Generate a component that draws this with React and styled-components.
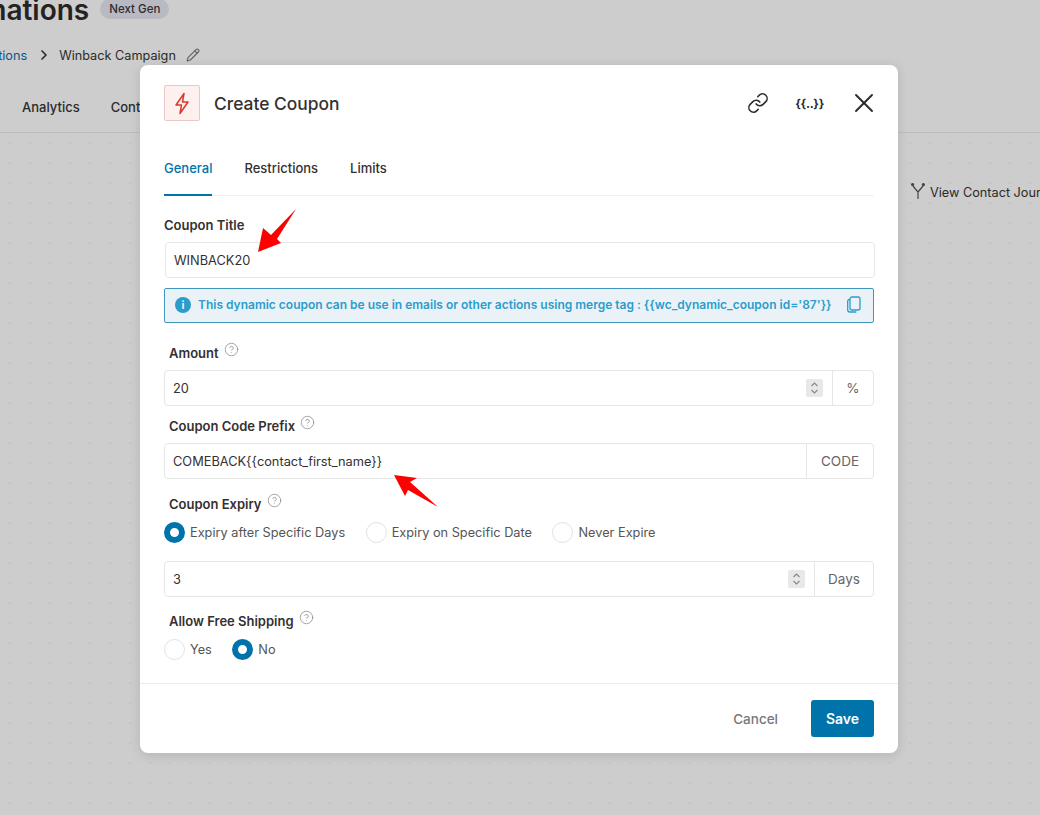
import React from 'react'
import styled, { createGlobalStyle } from 'styled-components'
import { ChevronRight, CircleHelp, Link, Pencil, X } from 'lucide-react'

const GlobalStyle = createGlobalStyle`
  html, body {
    margin: 0;
    padding: 0;
  }
  body {
    font-family: Inter, "Liberation Sans", sans-serif;
    color: #353030;
  }
  * {
    box-sizing: border-box;
  }
`

const Page = styled.div`
  position: relative;
  width: 1040px;
  height: 815px;
  overflow: hidden;
  background: #cdcdcd;
`

const PageTop = styled.div`
  height: 133px;
  border-bottom: 1px solid #bdbdbd;
`

const TitleRow = styled.div`
  display: flex;
  align-items: center;
  gap: 11px;
  height: 20px;
  margin-left: -83px;
`

const PageTitle = styled.h1`
  margin: 0;
  font-size: 28px;
  line-height: 20px;
  font-weight: 600;
  color: #252222;
  white-space: nowrap;
`

const Badge = styled.span`
  height: 20px;
  margin-top: -2px;
  padding: 0 9px;
  border-radius: 10px;
  background: #b9b9c2;
  font-size: 11.5px;
  font-weight: 500;
  line-height: 20px;
  white-space: nowrap;
  color: #2c2c30;
`

const Crumbs = styled.div`
  display: flex;
  align-items: center;
  height: 20px;
  margin: 25px 0 0 -48px;
  font-size: 12.7px;
  color: #2c2a2a;

  a {
    color: #07588a;
  }
`

const CrumbChevron = styled(ChevronRight)`
  margin: 0 7px 0 9px;
`

const CrumbPencil = styled(Pencil)`
  margin-left: 10px;
  color: #666;
`

const PageNav = styled.nav`
  display: flex;
  gap: 31px;
  margin: 32px 0 0 22px;
  font-size: 13px;
  font-weight: 500;
  line-height: 20px;
  color: #2c2a2a;
`

const Canvas = styled.div`
  display: flex;
  justify-content: flex-end;
  height: 682px;
  padding-top: 49px;
  background-image: radial-gradient(#c4c4c4 1px, transparent 1.2px);
  background-size: 20px 20px;
`

const JourneyLink = styled.div`
  display: flex;
  align-items: flex-start;
  gap: 4px;
  flex: 0 0 130px;
  min-width: 0;
  height: 22px;
  font-size: 12.7px;
  line-height: 22px;
  white-space: nowrap;
  color: #2c2a2a;

  svg {
    flex: none;
  }
`

const Modal = styled.div`
  position: absolute;
  top: 65px;
  left: 140px;
  width: 758px;
  height: 688px;
  border-radius: 8px;
  background: #fff;
  box-shadow: 0 2px 12px rgba(0, 0, 0, 0.12);
`

const ModalHeader = styled.header`
  display: flex;
  align-items: center;
  height: 76px;
  padding: 20px 24px 20px;
`

const IconBox = styled.div`
  display: flex;
  align-items: center;
  justify-content: center;
  width: 36px;
  height: 36px;
  margin-right: 14px;
  border: 1px solid #e9c9c5;
  border-radius: 2px;
  background: #fdf0ee;
  color: #d8392f;
`

const ModalTitle = styled.h2`
  flex: 1;
  margin: 0;
  font-size: 17.4px;
  font-weight: 500;
  color: #353030;
`

const HeaderActions = styled.div`
  display: flex;
  align-items: center;
  margin-right: -6px;
  color: #2c2a2a;
`

const MergeIcon = styled.span`
  margin: 0 24px 0 26px;
  font-size: 12px;
  font-weight: 700;
  letter-spacing: -0.3px;
`

const Tabs = styled.div`
  display: flex;
  gap: 32px;
  height: 55px;
  margin: 0 24px;
  border-bottom: 1px solid #f0f0f0;
`

const Tab = styled.div`
  height: 55px;
  padding-top: 17px;
  font-size: 13px;
  line-height: 20px;
  font-weight: 500;
  color: ${(p) => (p.$active ? '#0073aa' : '#353030')};
  border-bottom: 2px solid ${(p) => (p.$active ? '#0073aa' : 'transparent')};
`

const Form = styled.div`
  padding: 19px 24px 23px;
  border-bottom: 1px solid #ececec;
`

const Label = styled.div`
  display: flex;
  align-items: flex-start;
  gap: 5px;
  height: 20px;
  margin-top: ${(p) => p.$top || 0}px;
  padding-left: ${(p) => p.$indent || 0}px;
  font-size: 13px;
  line-height: 20px;
  font-weight: 600;
  color: #353030;
`

const HelpIcon = styled(CircleHelp)`
  margin-top: -1px;
  color: #888;
`

const InputGroup = styled.div`
  display: flex;
  align-items: stretch;
  height: 36px;
  margin: ${(p) => p.$top || 7}px ${(p) => -(p.$shift || 0)}px 0 ${(p) => p.$shift || 0}px;
  border: 1px solid #e6e6e6;
  border-radius: 4px;
  background: #fff;
`

const InputText = styled.div`
  flex: 1;
  padding-left: 8px;
  font-size: 12.8px;
  line-height: 35px;
  color: #353030;
`

const Stepper = styled.div`
  display: flex;
  align-items: center;
  justify-content: center;
  align-self: center;
  width: 17px;
  height: 18px;
  margin-right: 9px;
  border-radius: 2px;
  background: #e8e8e8;
  color: #888;
`

const Addon = styled.div`
  width: ${(p) => p.$width}px;
  border-left: 1px solid #e6e6e6;
  text-align: center;
  font-size: 13.5px;
  line-height: 35px;
  color: #666;
`

const Notice = styled.div`
  display: flex;
  align-items: center;
  height: 35px;
  margin-top: 10px;
  padding: 0 11px 2px 10px;
  border: 1px solid #3f97bb;
  border-radius: 2px;
  background: #eaf2f7;
  color: #2a9dcc;
`

const InfoBadge = styled.span`
  display: flex;
  align-items: center;
  justify-content: center;
  width: 16px;
  height: 16px;
  margin-right: 7px;
  border-radius: 50%;
  background: #2a9dcc;
  font-size: 11px;
  font-weight: 700;
  color: #eaf2f7;
`

const NoticeText = styled.span`
  flex: 1;
  font-size: 12px;
  font-weight: 600;
  white-space: nowrap;
`

const RadioRow = styled.div`
  display: flex;
  align-items: center;
  gap: 20.5px;
  height: 22px;
  margin-top: 7px;
`

const RadioItem = styled.div`
  display: flex;
  align-items: center;
  gap: 5px;
  font-size: 12.75px;
  color: #555;
`

const RadioDot = styled.span`
  width: 21px;
  height: 21px;
  border-radius: 50%;
  background: #fff;
  border: ${(p) => (p.$on ? '6px solid #0073aa' : '1px solid #e2e2e2')};
`

const ModalFooter = styled.footer`
  display: flex;
  align-items: center;
  justify-content: flex-end;
  gap: 33px;
  padding: 16px 24px;
`

const CancelButton = styled.button`
  padding: 0;
  border: 0;
  background: none;
  font: 500 13.5px Inter, sans-serif;
  color: #777;
`

const SaveButton = styled.button`
  width: 63px;
  height: 37px;
  border: 0;
  border-radius: 3px;
  background: #0073aa;
  font: 600 14px Inter, sans-serif;
  color: #fff;
`

const Arrow = styled.svg`
  position: absolute;
  left: ${(p) => p.$x}px;
  top: ${(p) => p.$y}px;
`

const BoltIcon = () => (
  <svg width="16" height="23" viewBox="0 0 16 23" fill="none" stroke="currentColor" strokeWidth="1.5" strokeLinejoin="round">
    <path d="M10 1.5 2 13h5.5L6 21.5 14 10H8.5z" />
  </svg>
)

const CopyIcon = () => (
  <svg width="16" height="17" viewBox="0 0 16 17" fill="none" stroke="currentColor" strokeWidth="1.3">
    <rect x="4" y="1" width="10" height="13" rx="2" />
    <path d="M4 3.5H3.4A1.7 1.7 0 0 0 1.7 5.2v8.6A2.2 2.2 0 0 0 3.9 16h6.4" />
  </svg>
)

const StepperIcon = () => (
  <svg width="9" height="14" viewBox="0 0 9 14" fill="none" stroke="currentColor" strokeWidth="1.2">
    <path d="M1.5 5 4.5 2l3 3M1.5 9l3 3 3-3" />
  </svg>
)

const ForkIcon = () => (
  <svg width="16" height="18" viewBox="0 0 16 18" fill="none" stroke="#444" strokeWidth="1.2">
    <path d="M8 17V10L3 4M8 10l5-6" />
    <circle cx="2.6" cy="2.6" r="1" fill="#444" />
    <circle cx="13.4" cy="2.6" r="1" fill="#444" />
  </svg>
)

const Help = () => <HelpIcon size={15} strokeWidth={1.2} />

const Radio = ({ on, children }) => (
  <RadioItem>
    <RadioDot $on={on} />
    {children}
  </RadioItem>
)

export default function App() {
  return (
    <Page>
      <GlobalStyle />
      <PageTop>
        <TitleRow>
          <PageTitle>Automations</PageTitle>
          <Badge>Next Gen</Badge>
        </TitleRow>
        <Crumbs>
          <a>Automations</a>
          <CrumbChevron size={16} strokeWidth={2.5} />
          Winback Campaign
          <CrumbPencil size={14} />
        </Crumbs>
        <PageNav>
          <span>Analytics</span>
          <span>Contacts</span>
        </PageNav>
      </PageTop>
      <Canvas>
        <JourneyLink>
          <ForkIcon />
          View Contact Journey
        </JourneyLink>
      </Canvas>

      <Modal>
        <ModalHeader>
          <IconBox>
            <BoltIcon />
          </IconBox>
          <ModalTitle>Create Coupon</ModalTitle>
          <HeaderActions>
            <Link size={22} strokeWidth={1.7} />
            <MergeIcon>{'{{..}}'}</MergeIcon>
            <X size={32} strokeWidth={1.4} />
          </HeaderActions>
        </ModalHeader>
        <Tabs>
          <Tab $active>General</Tab>
          <Tab>Restrictions</Tab>
          <Tab>Limits</Tab>
        </Tabs>
        <Form>
          <Label>Coupon Title</Label>
          <InputGroup $shift={1}>
            <InputText>WINBACK20</InputText>
          </InputGroup>
          <Notice>
            <InfoBadge>i</InfoBadge>
            <NoticeText>
              This dynamic coupon can be use in emails or other actions using merge tag : {"{{wc_dynamic_coupon id='87'}}"}
            </NoticeText>
            <CopyIcon />
          </Notice>
          <Label $top={20} $indent={5}>
            Amount
            <Help />
          </Label>
          <InputGroup>
            <InputText>20</InputText>
            <Stepper>
              <StepperIcon />
            </Stepper>
            <Addon $width={41}>%</Addon>
          </InputGroup>
          <Label $top={10} $indent={5}>
            Coupon Code Prefix
            <Help />
          </Label>
          <InputGroup>
            <InputText>COMEBACK{'{{contact_first_name}}'}</InputText>
            <Addon $width={67}>CODE</Addon>
          </InputGroup>
          <Label $top={15} $indent={5}>
            Coupon Expiry
            <Help />
          </Label>
          <RadioRow>
            <Radio on>Expiry after Specific Days</Radio>
            <Radio>Expiry on Specific Date</Radio>
            <Radio>Never Expire</Radio>
          </RadioRow>
          <InputGroup $top={18}>
            <InputText>3</InputText>
            <Stepper>
              <StepperIcon />
            </Stepper>
            <Addon $width={59}>Days</Addon>
          </InputGroup>
          <Label $top={14} $indent={5}>
            Allow Free Shipping
            <Help />
          </Label>
          <RadioRow>
            <Radio>Yes</Radio>
            <Radio on>No</Radio>
          </RadioRow>
        </Form>
        <ModalFooter>
          <CancelButton>Cancel</CancelButton>
          <SaveButton>Save</SaveButton>
        </ModalFooter>
      </Modal>

      <Arrow $x={255} $y={205} width="46" height="50" viewBox="0 0 46 50">
        <path d="M3 47 8 23l8 7L41 4 22 34l4 4z" fill="#f00" />
      </Arrow>
      <Arrow $x={390} $y={470} width="52" height="40" viewBox="0 0 52 40">
        <path d="M4 5 27 8l-7 4 28 25-30-17-3 6z" fill="#f00" />
      </Arrow>
    </Page>
  )
}
